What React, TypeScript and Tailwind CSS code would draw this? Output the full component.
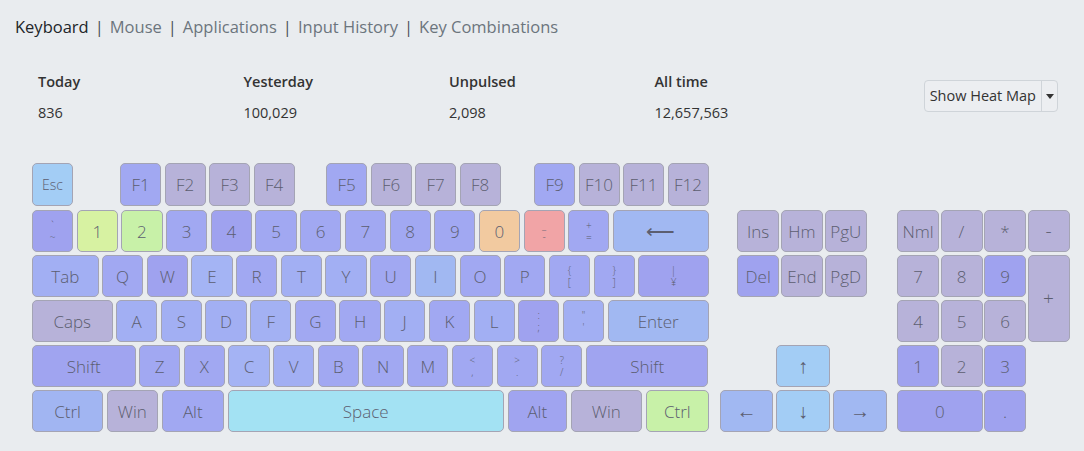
import React from 'react'

type K = { l: string | [string, string]; w?: number; c: string; fs?: number }

const B = '#a1a8f2'
const B2 = '#a2aff3'
const P = '#9fa2ef'
const L = '#a1b8f2'
const S = '#a3cdf5'
const G = '#b7b2d9'
const Y = '#d7f2a2'
const GN = '#c8f1a8'
const O = '#f2caa0'
const R = '#f1a4a6'
const C = '#a3e2f3'

const U = 41.2

const fRow: (K | number)[] = [
  { l: 'Esc', w: 41, c: S, fs: 14 },
  40,
  { l: 'F1', w: 41, c: B },
  { l: 'F2', w: 41, c: G },
  { l: 'F3', w: 41, c: G },
  { l: 'F4', w: 41, c: G },
  24.5,
  { l: 'F5', w: 41, c: B },
  { l: 'F6', w: 41, c: G },
  { l: 'F7', w: 41, c: G },
  { l: 'F8', w: 41, c: G },
  26.5,
  { l: 'F9', w: 41, c: B },
  { l: 'F10', w: 41, c: G },
  { l: 'F11', w: 41, c: G },
  { l: 'F12', w: 41, c: G },
]

const rows: K[][] = [
  [
    { l: ['`', '~'], c: P },
    { l: '1', c: Y },
    { l: '2', c: GN },
    { l: '3', c: B },
    { l: '4', c: P },
    { l: '5', c: B },
    { l: '6', c: B },
    { l: '7', c: B },
    { l: '8', c: B },
    { l: '9', c: B },
    { l: '0', c: O },
    { l: ['_', '-'], c: R },
    { l: ['+', '='], c: B },
    { l: '⟵', w: 95.9, c: L, fs: 20 },
  ],
  [
    { l: 'Tab', w: 66.5, c: B2 },
    { l: 'Q', c: B },
    { l: 'W', c: P },
    { l: 'E', c: '#a4b4f4' },
    { l: 'R', c: B },
    { l: 'T', c: B2 },
    { l: 'Y', c: B2 },
    { l: 'U', c: B },
    { l: 'I', c: L },
    { l: 'O', c: B },
    { l: 'P', c: B },
    { l: ['{', '['], c: B },
    { l: ['}', ']'], c: B },
    { l: ['|', '¥'], w: 70.6, c: P },
  ],
  [
    { l: 'Caps', w: 80.5, c: G },
    { l: 'A', c: B2 },
    { l: 'S', c: B2 },
    { l: 'D', c: B2 },
    { l: 'F', c: '#a3b1f3' },
    { l: 'G', c: B },
    { l: 'H', c: B },
    { l: 'J', c: B2 },
    { l: 'K', c: B },
    { l: 'L', c: B2 },
    { l: [':', ';'], c: P },
    { l: ['"', "'"], c: B2 },
    { l: 'Enter', w: 101.3, c: L },
  ],
  [
    { l: 'Shift', w: 103.5, c: '#a0a4f0' },
    { l: 'Z', c: B },
    { l: 'X', c: B },
    { l: 'C', c: '#a4b3f4' },
    { l: 'V', c: B2 },
    { l: 'B', c: B },
    { l: 'N', c: B },
    { l: 'M', c: B },
    { l: ['<', ','], c: B },
    { l: ['>', '.'], c: B },
    { l: ['?', '/'], c: B },
    { l: 'Shift', w: 122.5, c: '#a0a4f0' },
  ],
  [
    { l: 'Ctrl', w: 71, c: '#a1b5f2' },
    { l: 'Win', w: 51.5, c: G },
    { l: 'Alt', w: 62.5, c: B },
    { l: 'Space', w: 276.5, c: C },
    { l: 'Alt', w: 59.5, c: '#a0a4f0' },
    { l: 'Win', w: 71.5, c: G },
    { l: 'Ctrl', w: 63.5, c: GN },
  ],
]

function Key({ k, h = 42, full }: { k: K; h?: number; full?: boolean }) {
  return (
    <div
      className="flex flex-col items-center justify-center rounded-[5px] border border-[#a4a4b4] text-[#5c5e70] font-light shrink-0 leading-none"
      style={{
        width: full ? undefined : k.w ?? U,
        height: h,
        background: k.c,
        fontSize: k.fs ?? 17,
      }}
    >
      {Array.isArray(k.l) ? (
        <>
          <span className="text-[10px] leading-[12px]">{k.l[0]}</span>
          <span className="text-[10px] leading-[12px]">{k.l[1]}</span>
        </>
      ) : (
        <span>{k.l}</span>
      )}
    </div>
  )
}

const stats = [
  ['Today', '836'],
  ['Yesterday', '100,029'],
  ['Unpulsed', '2,098'],
  ['All time', '12,657,563'],
]

const tabs = ['Keyboard', 'Mouse', 'Applications', 'Input History', 'Key Combinations']

export default function App() {
  return (
    <div className="w-[1084px] h-[451px] bg-[#e9ecef] text-[#212529] font-['Open_Sans',sans-serif] overflow-hidden">
      <nav className="flex items-center pl-[15px] pt-[14px] text-[16.5px] leading-[26px]">
        {tabs.map((t, i) => (
          <React.Fragment key={t}>
            {i > 0 && <span className="mx-[6px] text-[#495057]">|</span>}
            <span className={i === 0 ? 'text-[#212529]' : 'text-[#6c757d]'}>{t}</span>
          </React.Fragment>
        ))}
      </nav>

      <div className="flex items-start pl-[38px] pr-[26px] mt-[31px]">
        {stats.map(([a, b]) => (
          <div key={a} className="w-[205.5px] text-[14.5px] text-[#333]">
            <div className="font-semibold leading-[22px]">{a}</div>
            <div className="mt-[9px] leading-[22px]">{b}</div>
          </div>
        ))}
        <div className="ml-auto mt-[9px] flex h-[32px] rounded-[4px] border border-[#cfd4d9] bg-[#eceef1] text-[14.5px] text-[#333]">
          <span className="flex items-center px-[5px]">Show Heat Map</span>
          <span className="flex w-[16px] items-center justify-center border-l border-[#cfd4d9]">
            <svg width="8" height="5" viewBox="0 0 8 5">
              <path d="M0 0h8L4 5z" fill="#333" />
            </svg>
          </span>
        </div>
      </div>

      <div className="ml-[32px] mt-[39px] flex flex-col">
        <div className="flex gap-[3.5px] mb-[4px]">
          {fRow.map((k, i) =>
            typeof k === 'number' ? (
              <div key={i} style={{ width: k }} className="shrink-0" />
            ) : (
              <Key key={i} k={k} h={43} />
            )
          )}
        </div>

        <div className="flex">
          <div className="flex flex-col gap-[3px]">
            {rows.map((r, i) => (
              <div key={i} className="flex gap-[3.5px]">
                {r.map((k, j) => (
                  <Key key={j} k={k} />
                ))}
              </div>
            ))}
          </div>

          <div className="ml-[11px] flex flex-col gap-[3px]">
            <div className="ml-[17px] grid grid-cols-[42.3px_42.3px_42.3px] gap-x-[1.5px] gap-y-[3px]">
              <Key k={{ l: 'Ins', c: G }} full />
              <Key k={{ l: 'Hm', c: G }} full />
              <Key k={{ l: 'PgU', c: G }} full />
              <Key k={{ l: 'Del', c: P }} full />
              <Key k={{ l: 'End', c: G }} full />
              <Key k={{ l: 'PgD', c: G }} full />
            </div>
            <div className="h-[42px]" />
            <div className="flex gap-[3px] pl-[56px]">
              <Key k={{ l: '↑', w: 54, c: S, fs: 20 }} />
            </div>
            <div className="flex gap-[3px]">
              <Key k={{ l: '←', w: 53, c: L, fs: 20 }} />
              <Key k={{ l: '↓', w: 54, c: S, fs: 20 }} />
              <Key k={{ l: '→', w: 54, c: L, fs: 20 }} />
            </div>
          </div>

          <div className="ml-[10px] grid grid-cols-[42px_42px_42px_42px] grid-rows-[42px_42px_42px_42px_42px] gap-x-[1.5px] gap-y-[3px]">
            <Key k={{ l: 'Nml', c: G }} full />
            <Key k={{ l: '/', c: G }} full />
            <Key k={{ l: '*', c: G }} full />
            <Key k={{ l: '-', c: G, fs: 19 }} full />
            <Key k={{ l: '7', c: G }} full />
            <Key k={{ l: '8', c: G }} full />
            <Key k={{ l: '9', c: P }} full />
            <div className="row-span-2">
              <Key k={{ l: '+', c: G, fs: 19 }} h={87} full />
            </div>
            <Key k={{ l: '4', c: G }} full />
            <Key k={{ l: '5', c: G }} full />
            <Key k={{ l: '6', c: G }} full />
            <Key k={{ l: '1', c: P }} full />
            <Key k={{ l: '2', c: G }} full />
            <Key k={{ l: '3', c: P }} full />
            <div className="col-span-2">
              <Key k={{ l: '0', c: P }} full />
            </div>
            <Key k={{ l: '.', c: P }} full />
          </div>
        </div>
      </div>
    </div>
  )
}
